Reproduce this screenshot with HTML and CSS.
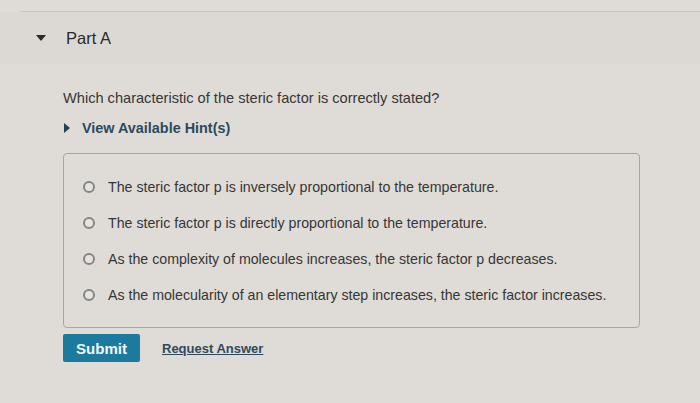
FILE: index.html
```html
<!DOCTYPE html>
<html>
<head>
<meta charset="utf-8">
<link rel="stylesheet" href="styles.css">
</head>
<body>
<div class="page">
  <div class="topline"></div>
  <div class="part-header">
    <span class="caret-down"></span>
    <span class="part-title">Part A</span>
  </div>
  <div class="content">
    <p class="question">Which characteristic of the steric factor is correctly stated?</p>
    <div class="hint">
      <span class="caret-right"></span>
      <span class="hint-text">View Available Hint(s)</span>
    </div>
    <div class="options">
      <label class="option"><span class="radio"></span><span class="opt-text">The steric factor p is inversely proportional to the temperature.</span></label>
      <label class="option"><span class="radio"></span><span class="opt-text">The steric factor p is directly proportional to the temperature.</span></label>
      <label class="option"><span class="radio"></span><span class="opt-text">As the complexity of molecules increases, the steric factor p decreases.</span></label>
      <label class="option"><span class="radio"></span><span class="opt-text">As the molecularity of an elementary step increases, the steric factor increases.</span></label>
    </div>
    <div class="actions">
      <button class="submit">Submit</button>
      <a class="request">Request Answer</a>
    </div>
  </div>
</div>
</body>
</html>
```
FILE: styles.css
```css
html, body {
  margin: 0;
  padding: 0;
}
body {
  background: #dfdcd7;
  font-family: "Liberation Sans", Arial, sans-serif;
  color: #343434;
  width: 700px;
  height: 403px;
  overflow: hidden;
}
.page {
  padding-top: 11px;
}
.topline {
  margin-left: 20px;
  height: 0;
  border-top: 1px solid #c8c5bf;
}
.part-header {
  display: flex;
  align-items: center;
  height: 52px;
  padding-left: 36px;
  background: #dcd9d4;
}
.caret-down {
  width: 0;
  height: 0;
  border-left: 5px solid transparent;
  border-right: 5px solid transparent;
  border-top: 6px solid #2a2a2a;
}
.part-title {
  margin-left: 20px;
  font-size: 16.5px;
  color: #2a2a2a;
}
.content {
  padding-left: 63px;
}
.question {
  margin: 25px 0 0 0;
  font-size: 14.6px;
  line-height: 18px;
  color: #363636;
}
.hint {
  display: flex;
  align-items: center;
  margin-top: 12px;
  height: 18px;
}
.caret-right {
  width: 0;
  height: 0;
  border-top: 5px solid transparent;
  border-bottom: 5px solid transparent;
  border-left: 6px solid #24404f;
  margin-left: 1px;
}
.hint-text {
  margin-left: 12px;
  font-size: 14.4px;
  font-weight: bold;
  color: #2c4a5c;
}
.options {
  margin-top: 16px;
  width: 577px;
  height: 175px;
  box-sizing: border-box;
  border: 1px solid #a8a6a1;
  border-radius: 4px;
  display: flex;
  flex-direction: column;
  padding-top: 24px;
}
.option {
  display: flex;
  align-items: center;
  height: 18px;
  margin-bottom: 18px;
  padding-left: 19px;
}
.radio {
  width: 8px;
  height: 8px;
  border: 2px solid #858585;
  border-radius: 50%;
  background: #e6e4e0;
  flex: none;
}
.opt-text {
  margin-left: 13px;
  font-size: 14.2px;
  color: #363636;
  white-space: nowrap;
}
.actions {
  display: flex;
  align-items: center;
  margin-top: 6px;
}
.submit {
  width: 77px;
  height: 28px;
  background: #1c7b9c;
  border: none;
  border-radius: 2px;
  color: #f4f8fa;
  font-family: "Liberation Sans", Arial, sans-serif;
  font-size: 15px;
  font-weight: bold;
  padding: 0;
}
.request {
  margin-left: 22px;
  font-size: 13px;
  font-weight: bold;
  color: #2e4a5c;
  text-decoration: underline;
}
```
